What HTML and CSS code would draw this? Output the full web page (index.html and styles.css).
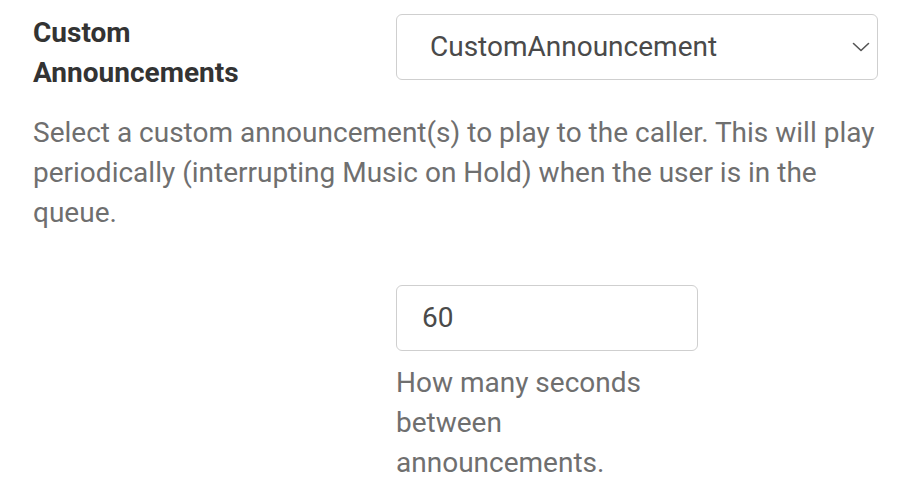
FILE: index.html
```html
<!DOCTYPE html>
<html>
<head>
<meta charset="utf-8">
<link rel="stylesheet" href="styles.css">
</head>
<body>
<div class="form">
  <div class="row">
    <label class="label">Custom Announcements</label>
    <div class="control">
      <div class="select">
        <span class="select-value">CustomAnnouncement</span>
        <svg class="chevron" width="18" height="10" viewBox="0 0 18 10"><path d="M1.5 1.5 L9 8.5 L16.5 1.5" fill="none" stroke="#555" stroke-width="1.6" stroke-linecap="round" stroke-linejoin="round"/></svg>
      </div>
    </div>
  </div>
  <p class="description">Select a custom announcement(s) to play to the caller. This will play periodically (interrupting Music on Hold) when the user is in the queue.</p>
  <div class="row row-second">
    <div class="label"></div>
    <div class="control">
      <div class="input">60</div>
      <p class="help">How many seconds between announcements.</p>
    </div>
  </div>
</div>
</body>
</html>
```

FILE: styles.css
```css
html, body {
  margin: 0;
  padding: 0;
  background: #ffffff;
}
body {
  font-family: Roboto, "Liberation Sans", sans-serif;
  font-size: 28px;
  line-height: 40px;
  color: #333;
}
.form {
  padding: 13px 38px 0 33px;
}
.row {
  display: flex;
}
.label {
  width: 363px;
  flex: none;
  font-weight: 700;
  color: #333;
  padding-right: 100px;
  box-sizing: border-box;
}
.control {
  flex: 1;
}
.select {
  margin-top: 1px;
  height: 66px;
  box-sizing: border-box;
  border: 1px solid #cfcfcf;
  border-radius: 6px;
  display: flex;
  align-items: center;
  justify-content: space-between;
  padding: 0 7px 0 33px;
  color: #4a4a4a;
}
.chevron {
  display: block;
}
.description {
  margin: 20px 0 0 0;
  color: #6f6f6f;
}
.row-second {
  margin-top: 52px;
}
.input {
  width: 302px;
  height: 66px;
  box-sizing: border-box;
  border: 1px solid #cfcfcf;
  border-radius: 6px;
  display: flex;
  align-items: center;
  padding-left: 25px;
  color: #4a4a4a;
}
.help {
  margin: 12px 0 0 0;
  width: 302px;
  color: #6f6f6f;
}
```
